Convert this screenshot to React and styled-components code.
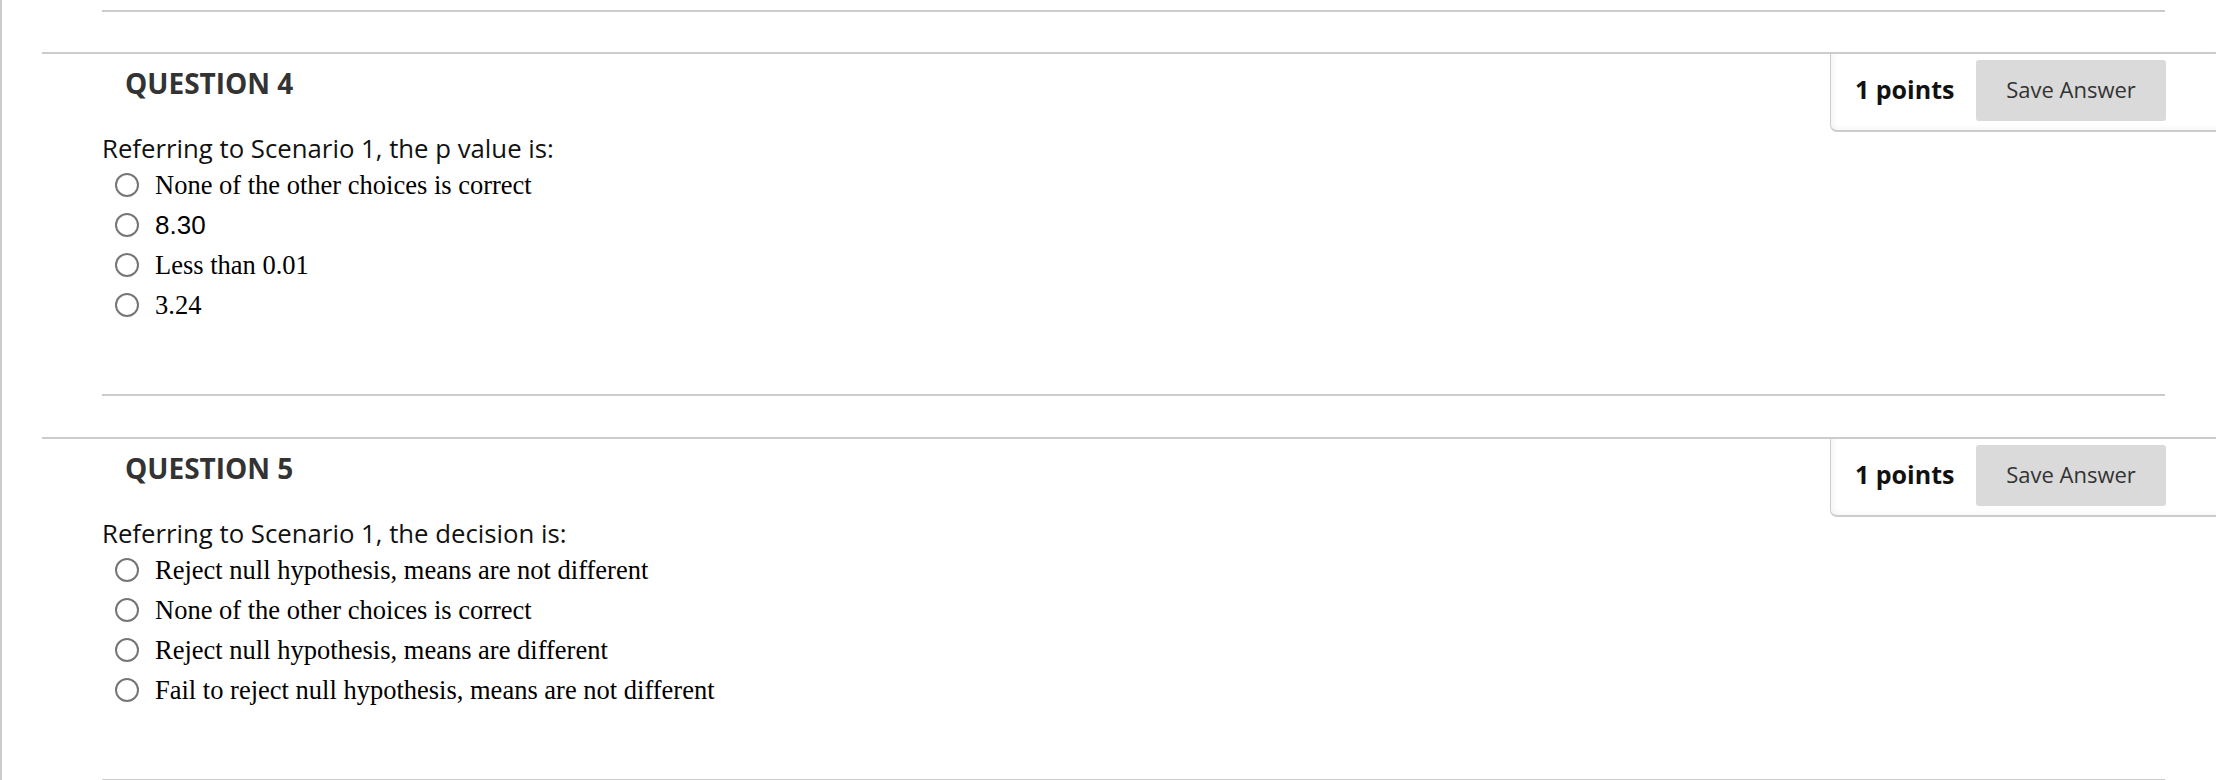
import React from "react";
import styled, { createGlobalStyle } from "styled-components";

const Global = createGlobalStyle`
  html, body { margin: 0; padding: 0; background: #fff; }
  body { font-family: "Open Sans", "Liberation Sans", sans-serif; }
`;

const Page = styled.div`
  min-height: 780px;
  border-left: 2px solid #cccccc;
  box-sizing: border-box;
  overflow: hidden;
`;

const Tail = styled.div`
  height: 10px;
  margin: 0 51px 0 100px;
  border-bottom: 2px solid #cccccc;
`;

const Block = styled.section`
  margin-top: ${(p) => p.$gap}px;
  margin-left: 40px;
  border-top: 2px solid #cccccc;
`;

const Header = styled.div`
  display: flex;
  justify-content: space-between;
  align-items: flex-start;
  height: 78px;
`;

const Title = styled.h2`
  margin: 10px 0 0 83px;
  font-family: "Open Sans", sans-serif;
  font-weight: 700;
  font-size: 28px;
  line-height: 38px;
  color: #333333;
  letter-spacing: 0;
`;

const PointsBox = styled.div`
  box-sizing: border-box;
  width: 386px;
  height: 78px;
  display: flex;
  align-items: center;
  align-self: flex-start;
  padding: 6px 50px 9px 24px;
  border-left: 1px solid #cccccc;
  border-bottom: 2px solid #cccccc;
  border-bottom-left-radius: 7px;
  box-shadow: inset 3px -2px 4px rgba(0, 0, 0, 0.04);
  background: #fff;
`;

const Points = styled.span`
  font-family: "Open Sans", sans-serif;
  font-weight: 700;
  font-size: 25px;
  color: #111111;
  margin-top: -4px;
  flex: 1;
`;

const SaveButton = styled.button`
  width: 190px;
  height: 61px;
  border: none;
  border-radius: 3px;
  background: #dadada;
  color: #333333;
  font-family: "Open Sans", sans-serif;
  font-size: 22px;
  padding: 0 0 4px;
  cursor: pointer;
`;

const Body = styled.div`
  margin: 0 51px 0 60px;
  padding-bottom: 69px;
  border-bottom: 2px solid #cccccc;
`;

const Prompt = styled.p`
  margin: 0;
  font-family: "Open Sans", sans-serif;
  font-size: 25.75px;
  line-height: 33px;
  color: #111111;
`;

const Options = styled.ul`
  list-style: none;
  margin: 0;
  padding: 0;
`;

const Option = styled.li`
  display: flex;
  align-items: center;
  height: 40px;
`;

const Radio = styled.input.attrs({ type: "radio" })`
  appearance: none;
  -webkit-appearance: none;
  box-sizing: border-box;
  width: 24px;
  height: 24px;
  margin: 0 16px 0 13px;
  border: 2px solid #767676;
  border-radius: 50%;
  background: #fff;
  flex: none;
`;

const Label = styled.label`
  font-family: ${(p) =>
    p.$sans ? '"Liberation Sans", Arial, sans-serif' : '"Liberation Serif", "Times New Roman", serif'};
  font-size: ${(p) => (p.$sans ? 26 : 26.5)}px;
  line-height: 30px;
  color: #000000;
`;

const questions = [
  {
    n: 4,
    prompt: "Referring to Scenario 1, the p value is:",
    options: [
      { t: "None of the other choices is correct" },
      { t: "8.30", sans: true },
      { t: "Less than 0.01" },
      { t: "3.24" },
    ],
  },
  {
    n: 5,
    prompt: "Referring to Scenario 1, the decision is:",
    options: [
      { t: "Reject null hypothesis, means are not different" },
      { t: "None of the other choices is correct" },
      { t: "Reject null hypothesis, means are different" },
      { t: "Fail to reject null hypothesis, means are not different" },
    ],
  },
];

export default function App() {
  return (
    <>
      <Global />
      <Page>
        <Tail />
        {questions.map((q, qi) => (
          <Block key={q.n} $gap={qi === 0 ? 40 : 41}>
            <Header>
              <Title>QUESTION {q.n}</Title>
              <PointsBox>
                <Points>1 points</Points>
                <SaveButton>Save Answer</SaveButton>
              </PointsBox>
            </Header>
            <Body>
              <Prompt>{q.prompt}</Prompt>
              <Options>
                {q.options.map((o, i) => (
                  <Option key={i}>
                    <Radio name={`q${q.n}`} id={`q${q.n}-${i}`} />
                    <Label htmlFor={`q${q.n}-${i}`} $sans={o.sans}>
                      {o.t}
                    </Label>
                  </Option>
                ))}
              </Options>
            </Body>
          </Block>
        ))}
      </Page>
    </>
  );
}
